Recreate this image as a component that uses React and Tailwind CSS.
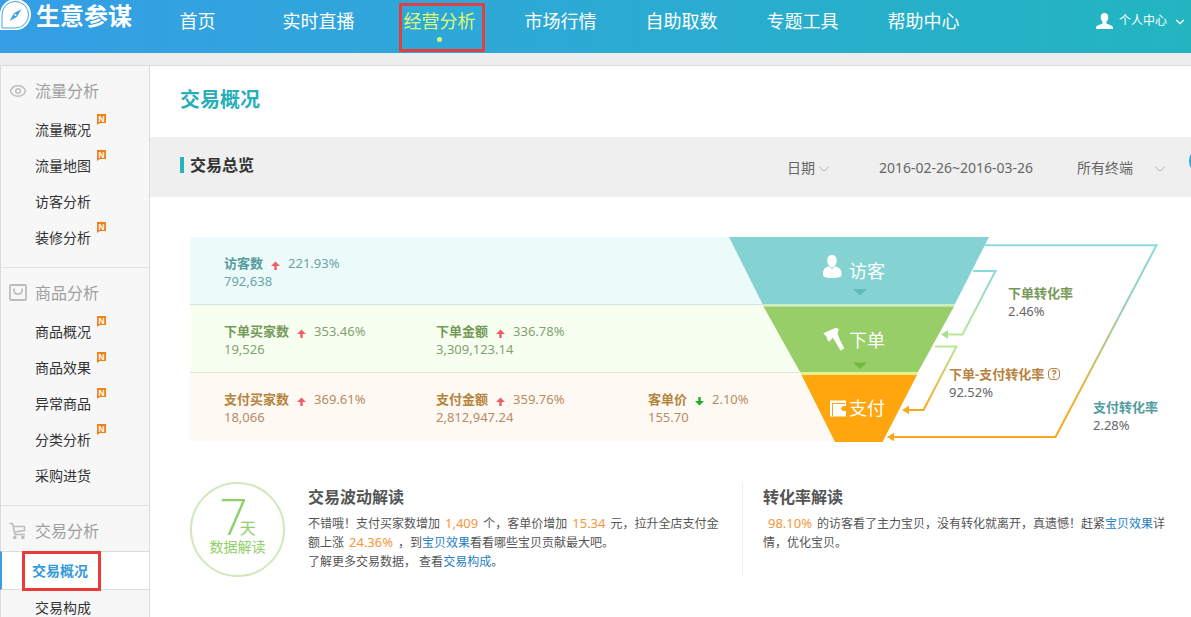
import React from "react";
import { ChevronDown, Eye } from "lucide-react";

const navItems = ["首页", "实时直播", "经营分析", "市场行情", "自助取数", "专题工具", "帮助中心"];

const BagIcon = () => (
  <svg viewBox="0 0 18 18" className="w-[18px] h-[18px]" fill="none" stroke="#bdbdbd" strokeWidth="1.8">
    <rect x="1" y="1" width="16" height="15" rx="1" />
    <path d="M5 4.5V6c0 5.500 8 5.500 8 0V4.500" />
  </svg>
);

const CartIcon = () => (
  <svg viewBox="0 0 18 18" className="w-[18px] h-[18px]" fill="none" stroke="#bdbdbd" strokeWidth="1.6">
    <path d="M0.5 1.5H3.5L6 12.5H16" />
    <path d="M4.5 4.5H15.5V8.5L5.5 10" />
    <rect x="5" y="14.6" width="1.6" height="1.6" />
    <rect x="13" y="14.6" width="1.6" height="1.6" />
  </svg>
);

const menu = [
  {
    title: "流量分析",
    icon: <Eye className="w-[18px] h-[18px] text-[#bdbdbd]" />,
    items: [
      { name: "流量概况", isNew: true },
      { name: "流量地图", isNew: true },
      { name: "访客分析" },
      { name: "装修分析", isNew: true },
    ],
  },
  {
    title: "商品分析",
    icon: <BagIcon />,
    items: [
      { name: "商品概况", isNew: true },
      { name: "商品效果", isNew: true },
      { name: "异常商品", isNew: true },
      { name: "分类分析", isNew: true },
      { name: "采购进货" },
    ],
  },
  {
    title: "交易分析",
    icon: <CartIcon />,
    items: [{ name: "交易概况", active: true }, { name: "交易构成" }],
  },
];

const rows = [
  {
    box: "bg-[#edfafa] border-[#d5e6e0]",
    label: "text-[#559c9c]",
    value: "text-[#6ba5a5]",
    cells: [{ label: "访客数", up: true, pct: "221.93%", value: "792,638" }],
  },
  {
    box: "bg-[#f6fff0] border-[#dfe5d5]",
    label: "text-[#76995a]",
    value: "text-[#85a073]",
    cells: [
      { label: "下单买家数", up: true, pct: "353.46%", value: "19,526" },
      { label: "下单金额", up: true, pct: "336.78%", value: "3,309,123.14" },
    ],
  },
  {
    box: "bg-[#fff9f3] border-[#fff9f3]",
    label: "text-[#b58440]",
    value: "text-[#b58c66]",
    cells: [
      { label: "支付买家数", up: true, pct: "369.61%", value: "18,066" },
      { label: "支付金额", up: true, pct: "359.76%", value: "2,812,947.24" },
      { label: "客单价", up: false, pct: "2.10%", value: "155.70" },
    ],
  },
];

const Trend = ({ up }) =>
  up ? (
    <svg viewBox="0 0 9 9" className="w-[9px] h-[9px] mt-1" fill="#f25c66">
      <path d="M4.5 0.5L9 5H5.7V9H3.3V5H0Z" />
    </svg>
  ) : (
    <svg viewBox="0 0 9 9" className="w-[9px] h-[9px] mt-1" fill="#1fae2c">
      <path d="M4.5 8.5L9 4H5.7V0H3.3V4H0Z" />
    </svg>
  );

const Header = () => (
  <header className="h-[53px] shrink-0 flex bg-linear-to-r from-[#359ee6] to-[#22b5c0] text-white">
    <a href="#home" className="w-[137px] h-8 shrink-0 flex items-center gap-1">
      <svg viewBox="0 0 32 32" className="w-8 h-8">
        <path d="M0 30V15A15.5 15.5 0 1 1 15.5 30Z" fill="#fff" />
        <path d="M2 28V15A13.3 13.3 0 1 1 15.3 28Z" fill="none" stroke="#46a6e6" strokeWidth="1" />
        <path d="M21.5 9L16.8 17L9.5 21L14 13.2Z" fill="#3a9fe4" />
        <circle cx="15.4" cy="15" r="1.1" fill="#fff" />
      </svg>
      <span className="text-2xl leading-8 font-bold">生意参谋</span>
    </a>
    <nav className="flex">
      {navItems.map((item) => (
        <a
          key={item}
          href="#nav"
          className="relative w-[121px] h-[42px] flex items-center justify-center text-lg"
        >
          {item === "经营分析" ? (
            <>
              <span className="text-[#dcfb76]">{item}</span>
              <i className="absolute top-[37px] left-[58px] w-[5px] h-[5px] rounded-full bg-[#dcfb76]" />
              <i className="absolute top-[3px] left-5 w-[86px] h-[49px] border-3 border-[#e23f3f]" />
            </>
          ) : (
            item
          )}
        </a>
      ))}
    </nav>
    <button className="ml-auto mr-1 h-[42px] flex items-center gap-1.5 text-xs">
      <svg viewBox="0 0 17 16" className="w-[17px] h-4" fill="#fff">
        <path d="M8.5 0C11 0 12.3 1.8 12.3 4.2C12.3 6.2 11.5 7.8 10.4 8.7V10.2C10.4 11 16.5 11.8 17 14.2V16H0V14.2C.5 11.8 6.6 11 6.6 10.2V8.7C5.5 7.8 4.7 6.2 4.7 4.2C4.7 1.8 6 0 8.500 0Z" />
      </svg>
      个人中心
      <ChevronDown className="w-3.5 h-3.5 mt-0.5" />
    </button>
  </header>
);

const Sidebar = () => (
  <aside className="w-[150px] shrink-0 border-x border-[#dcdcdc] bg-[#f7f7f7]">
    {menu.map((group) => (
      <section key={group.title} className="border-b border-[#e2e2e2] pb-[11px]">
        <h3 className="h-[46px] pt-1 pl-2 flex items-center gap-2 text-base text-[#a0a0a0]">
          {group.icon}
          {group.title}
        </h3>
        <ul className="text-sm text-[#333]">
          {group.items.map((item) =>
            item.active ? (
              <li
                key={item.name}
                className="relative -ml-px -mt-px h-[39px] flex items-center border-y border-[#dcdcdc] border-l-2 border-l-[#3a9fe0] bg-white pl-[30px]"
              >
                <a href="#menu" className="font-bold text-[#3498db]">
                  {item.name}
                </a>
                <i className="absolute -top-px left-5 w-[79px] h-10 border-3 border-[#ea3a3a]" />
              </li>
            ) : (
              <li key={item.name} className="h-9 pl-[34px] flex items-center">
                <a href="#menu">{item.name}</a>
                {item.isNew && (
                  <span className="relative self-start mt-0.5 ml-1.5 w-[9px] h-[9px] bg-[#f57f17] text-white text-[8px] leading-[9px] font-bold text-center">
                    N
                    <svg viewBox="0 0 3 2" className="absolute top-[9px] left-0 w-[3px] h-0.5" fill="#f57f17">
                      <path d="M0 0H3L0 2Z" />
                    </svg>
                  </span>
                )}
              </li>
            )
          )}
        </ul>
      </section>
    ))}
  </aside>
);

const Filters = () => (
  <div className="mt-0.5 flex items-center text-sm text-[#666]">
    <label className="relative mr-[46px]">
      <select aria-label="日期" className="appearance-none w-11 bg-transparent">
        <option>日期</option>
      </select>
      <ChevronDown strokeWidth={1} className="absolute -right-0.5 top-0.5 w-[18px] h-[18px] text-[#999] pointer-events-none" />
    </label>
    <button className="mr-[42px] w-[158px] text-center">2016-02-26~2016-03-26</button>
    <label className="relative">
      <select aria-label="终端" className="appearance-none w-[90px] bg-transparent">
        <option>所有终端</option>
      </select>
      <ChevronDown strokeWidth={1} className="absolute -right-0.5 top-0.5 w-[18px] h-[18px] text-[#999] pointer-events-none" />
    </label>
  </div>
);

const FunnelChart = () => (
  <div className="relative w-[430px] shrink-0 -ml-[120px] text-[13px] leading-[18px] text-[#666]">
    <svg viewBox="0 0 430 205" className="w-[430px] h-[205px]" fill="none">
      <defs>
        <linearGradient id="all" gradientUnits="userSpaceOnUse" x1="0" y1="8" x2="0" y2="200">
          <stop offset="0" stopColor="#8adad8" />
          <stop offset="0.3" stopColor="#93d0bd" />
          <stop offset="0.6" stopColor="#c9c06a" />
          <stop offset="0.8" stopColor="#f0b030" />
          <stop offset="1" stopColor="#f9a71a" />
        </linearGradient>
        <linearGradient id="order" gradientUnits="userSpaceOnUse" x1="0" y1="34" x2="0" y2="98">
          <stop offset="0" stopColor="#8adad8" />
          <stop offset="1" stopColor="#b9e695" />
        </linearGradient>
        <linearGradient id="pay" gradientUnits="userSpaceOnUse" x1="0" y1="109" x2="0" y2="173">
          <stop offset="0" stopColor="#b9e695" />
          <stop offset="1" stopColor="#f7a81c" />
        </linearGradient>
      </defs>
      <path d="M0 0H260L153 205H106Z" fill="#fff" />
      <path d="M0 0H260L226 67H33.5Z" fill="#84d3d2" />
      <path d="M33.5 67H226L225 69.5H34.5Z" fill="#c9efc2" />
      <path d="M34.5 69.5H225L189 135H71Z" fill="#97ce67" />
      <path d="M71 135H189L188 138H72.5Z" fill="#e3f08c" />
      <path d="M72.5 138H188L153.5 205H106Z" fill="#ffa50d" />
      <path d="M124 52H138L131 58.5Z" fill="#5fbcba" />
      <path d="M124 125.5H138L131 132Z" fill="#6fb944" />
      <path d="M256 8.3H427.5L326.5 200H163" stroke="url(#all)" strokeWidth="2" />
      <path d="M158 200L165 195.8V204.2Z" fill="#f9a71a" />
      <path d="M244 34H266.5L233.5 97.5H217" stroke="url(#order)" strokeWidth="2" />
      <path d="M212 97.5L219 93.3V101.7Z" fill="#a5de8a" />
      <path d="M206 109.5H227.5L194.5 173H178" stroke="url(#pay)" strokeWidth="2" />
      <path d="M173 173L180 168.8V177.2Z" fill="#f7a81c" />
      {/* visitor */}
      <path
        d="M103 18C106 18 107.8 20.2 107.8 23.5C107.8 25.6 107 27.7 105.6 29.2C109 29.8 112.5 32 112.5 36V38C112.5 40 109.5 41 103 41S94 40 94 38V36C94 32 97 29.8 100.4 29.2C99 27.7 98.2 25.6 98.2 23.5C98.2 20.2 100 18 103 18Z"
        fill="#fff"
      />
      <path d="M100.5 29.3L103 31.5L105.5 29.3" stroke="#84d3d2" />
      {/* gavel */}
      <path
        d="M94.3 96.3L99.3 94L107 90.7L109.7 92L108.7 97.3L111 103L115.3 111.3L111.7 113.7L105.3 103L103.7 100.7L100.3 104.7L98.3 103L97.7 99.7Z"
        fill="#fff"
      />
      {/* wallet */}
      <path d="M101 163.5H117V169H114L111.5 171.5L114 174H117V179.5H101Z" fill="#fff" />
      <path d="M103.5 179V166.5H116" stroke="#ffa50d" />
    </svg>
    <span className="absolute left-[120px] top-[22px] text-lg leading-6 text-white">访客</span>
    <span className="absolute left-[120px] top-[91px] text-lg leading-6 text-white">下单</span>
    <span className="absolute left-[120px] top-[159px] text-lg leading-6 text-white">支付</span>
    <dl className="absolute left-[279px] top-[47px]">
      <dt className="font-bold text-[#76995a]">下单转化率</dt>
      <dd>2.46%</dd>
    </dl>
    <dl className="absolute left-[220px] top-32">
      <dt className="flex items-center gap-1 font-bold text-[#b98240]">
        下单-支付转化率
        <button className="w-3 h-3 rounded-sm border border-[#b98240] text-[10px] leading-[10px]">?</button>
      </dt>
      <dd>92.52%</dd>
    </dl>
    <dl className="absolute left-[364px] top-[161px]">
      <dt className="font-bold text-[#559c9c]">支付转化率</dt>
      <dd>2.28%</dd>
    </dl>
  </div>
);

const Overview = () => (
  <div className="flex items-start pl-10 pr-8 pt-10">
    <div className="flex-1 min-w-0">
      {rows.map((row) => (
        <div key={row.box} className={`h-[68px] pt-[17px] pl-[34px] flex border-b text-[13px] leading-[18px] ${row.box}`}>
          {row.cells.map((cell) => (
            <dl key={cell.label} className={`w-[212px] shrink-0 ${row.value}`}>
              <dt className="flex items-center gap-2">
                <b className={row.label}>{cell.label}</b>
                <Trend up={cell.up} />
                {cell.pct}
              </dt>
              <dd>{cell.value}</dd>
            </dl>
          ))}
        </div>
      ))}
    </div>
    <FunnelChart />
  </div>
);

const Num = ({ children }) => <span className="mx-[5px] text-[13px] text-[#f5963c]">{children}</span>;

const Insights = () => (
  <div className="flex pl-10 pr-5 pt-10 text-xs leading-[19px] text-[#555]">
    <div className="w-[95px] h-[95px] shrink-0 rounded-full border-2 border-[#cfe9bd] flex flex-col items-center text-[#90cf6a]">
      <div className="mt-2 h-12 flex items-end">
        <span className="font-['Open_Sans'] font-light text-[50px] leading-[48px]">7</span>
        <span className="-ml-2 text-base leading-6">天</span>
      </div>
      <span className="text-sm leading-[14px]">数据解读</span>
    </div>
    <section className="ml-[23px] w-[435px] shrink-0 pt-[3px] border-r border-[#eef2f2]">
      <h3 className="mb-[5px] text-base leading-6 font-bold">交易波动解读</h3>
      <p>
        不错哦！支付买家数增加<Num>1,409</Num>个，客单价增加<Num>15.34</Num>元，拉升全店支付金
        <br />
        额上涨<Num>24.36%</Num>，到<a href="#effect" className="text-[#1f80c4]">宝贝效果</a>看看哪些宝贝贡献最大吧。
      </p>
      <p>
        了解更多交易数据， 查看<a href="#structure" className="text-[#1f80c4]">交易构成</a>。
      </p>
    </section>
    <section className="pl-5 pt-[3px]">
      <h3 className="mb-[5px] text-base leading-6 font-bold">转化率解读</h3>
      <p>
        <Num>98.10%</Num>的访客看了主力宝贝，没有转化就离开，真遗憾！赶紧<a href="#effect" className="text-[#1f80c4]">宝贝效果</a>详
        <br />
        情，优化宝贝。
      </p>
    </section>
  </div>
);

const App = () => {
  return (
    <div className="h-screen overflow-hidden flex flex-col bg-[#ededed] font-['Noto_Sans','Noto_Sans_CJK_SC',sans-serif]">
      <Header />
      <div className="mt-3 flex-1 min-h-0 flex border-t border-[#dcdcdc]">
        <Sidebar />
        <main className="flex-1 min-w-0 bg-white">
          <h1 className="h-[71px] pb-1 pl-[30px] flex items-center text-xl font-bold text-[#26afb9]">交易概况</h1>
          <div className="relative h-[60px] pl-[30px] pr-6 flex items-center justify-between bg-[#efefef] overflow-hidden">
            <h2 className="mb-1 flex items-center gap-1.5 text-base font-bold text-[#333]">
              <i className="w-1 h-4 bg-[#26b3bb]" />
              交易总览
            </h2>
            <Filters />
            <i className="absolute -right-[26px] top-2.5 w-7 h-7 rounded-full bg-[#35a5e0]" />
          </div>
          <Overview />
          <Insights />
        </main>
      </div>
    </div>
  );
};

export default App;
